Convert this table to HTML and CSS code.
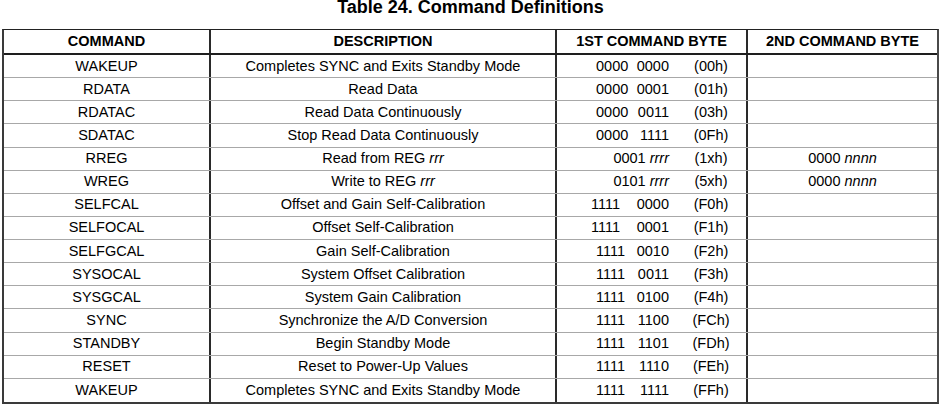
FILE: index.html
```html
<!DOCTYPE html>
<html>
<head>
<meta charset="utf-8">
<link rel="stylesheet" href="styles.css">
</head>
<body>
<div class="page">
  <div class="title">Table 24. Command Definitions</div>
  <div class="table">
    <div class="row head">
      <div class="c cmd">COMMAND</div>
      <div class="c desc">DESCRIPTION</div>
      <div class="c byte1h">1ST COMMAND BYTE</div>
      <div class="c byte2">2ND COMMAND BYTE</div>
    </div>
    <div class="body">
      <div class="row"><div class="c cmd">WAKEUP</div><div class="c desc">Completes SYNC and Exits Standby Mode</div><div class="c bin"><span class="n1">0000</span><span>0000</span></div><div class="c hex">(00h)</div><div class="c byte2"></div></div>
      <div class="row"><div class="c cmd">RDATA</div><div class="c desc">Read Data</div><div class="c bin"><span class="n1">0000</span><span>0001</span></div><div class="c hex">(01h)</div><div class="c byte2"></div></div>
      <div class="row"><div class="c cmd">RDATAC</div><div class="c desc">Read Data Continuously</div><div class="c bin"><span class="n1">0000</span><span>0011</span></div><div class="c hex">(03h)</div><div class="c byte2"></div></div>
      <div class="row"><div class="c cmd">SDATAC</div><div class="c desc">Stop Read Data Continuously</div><div class="c bin"><span class="n1">0000</span><span>1111</span></div><div class="c hex">(0Fh)</div><div class="c byte2"></div></div>
      <div class="row"><div class="c cmd">RREG</div><div class="c desc"><span>Read from REG <i>rrr</i></span></div><div class="c bin"><span>0001 <i>rrrr</i></span></div><div class="c hex">(1xh)</div><div class="c byte2"><span>0000 <i>nnnn</i></span></div></div>
      <div class="row"><div class="c cmd">WREG</div><div class="c desc"><span>Write to REG <i>rrr</i></span></div><div class="c bin"><span>0101 <i>rrrr</i></span></div><div class="c hex">(5xh)</div><div class="c byte2"><span>0000 <i>nnnn</i></span></div></div>
      <div class="row"><div class="c cmd">SELFCAL</div><div class="c desc">Offset and Gain Self-Calibration</div><div class="c bin wide"><span class="n1">1111</span><span>0000</span></div><div class="c hex">(F0h)</div><div class="c byte2"></div></div>
      <div class="row"><div class="c cmd">SELFOCAL</div><div class="c desc">Offset Self-Calibration</div><div class="c bin wide"><span class="n1">1111</span><span>0001</span></div><div class="c hex">(F1h)</div><div class="c byte2"></div></div>
      <div class="row"><div class="c cmd">SELFGCAL</div><div class="c desc">Gain Self-Calibration</div><div class="c bin"><span class="n1">1111</span><span>0010</span></div><div class="c hex">(F2h)</div><div class="c byte2"></div></div>
      <div class="row"><div class="c cmd">SYSOCAL</div><div class="c desc">System Offset Calibration</div><div class="c bin"><span class="n1">1111</span><span>0011</span></div><div class="c hex">(F3h)</div><div class="c byte2"></div></div>
      <div class="row"><div class="c cmd">SYSGCAL</div><div class="c desc">System Gain Calibration</div><div class="c bin"><span class="n1">1111</span><span>0100</span></div><div class="c hex">(F4h)</div><div class="c byte2"></div></div>
      <div class="row"><div class="c cmd">SYNC</div><div class="c desc">Synchronize the A/D Conversion</div><div class="c bin"><span class="n1">1111</span><span>1100</span></div><div class="c hex">(FCh)</div><div class="c byte2"></div></div>
      <div class="row"><div class="c cmd">STANDBY</div><div class="c desc">Begin Standby Mode</div><div class="c bin"><span class="n1">1111</span><span>1101</span></div><div class="c hex">(FDh)</div><div class="c byte2"></div></div>
      <div class="row"><div class="c cmd">RESET</div><div class="c desc">Reset to Power-Up Values</div><div class="c bin"><span class="n1">1111</span><span>1110</span></div><div class="c hex">(FEh)</div><div class="c byte2"></div></div>
      <div class="row last"><div class="c cmd">WAKEUP</div><div class="c desc">Completes SYNC and Exits Standby Mode</div><div class="c bin"><span class="n1">1111</span><span>1111</span></div><div class="c hex">(FFh)</div><div class="c byte2"></div></div>
    </div>
  </div>
</div>
</body>
</html>
```
FILE: styles.css
```css
* { box-sizing: border-box; }
html, body { margin: 0; padding: 0; background: #fff; }
body {
  font-family: "Liberation Sans", Arial, sans-serif;
  font-size: 14.5px;
  color: #000;
  width: 941px;
  height: 406px;
  overflow: hidden;
}
.page {
  padding: 0 2px;
}
.title {
  font-weight: bold;
  font-size: 18px;
  line-height: 14px;
  text-align: center;
  height: 29px;
}
.table {
  width: 937px;
  border-top: 1px solid #222;
  border-left: 2px solid #3a3a3a;
  border-right: 2px solid #4a4a4a;
  border-bottom: 2px solid #3a3a3a;
  display: flex;
  flex-direction: column;
}
.row {
  display: grid;
  grid-template-columns: 207px 346px 119px 72px 1fr;
  border-bottom: 1px solid #a8a8a8;
}
.row.last { border-bottom: none; }
.head {
  grid-template-columns: 207px 346px 191px 1fr;
  height: 25px;
  border-bottom: 2px solid #1e1e1e;
  font-weight: bold;
}
.body {
  height: 347px;
  display: grid;
  grid-template-rows: repeat(15, 1fr);
}
.c {
  display: flex;
  align-items: center;
  justify-content: center;
  border-right: 2px solid #2a2a2a;
  white-space: pre;
  padding-bottom: 1px;
}
.c:last-child { border-right: none; }
.bin {
  border-right: none;
  justify-content: flex-end;
  padding-right: 7px;
  padding-left: 39px;
}
.bin.wide { padding-left: 34px; }
.bin .n1 { margin-right: auto; }
.hex { justify-content: center; }
i { font-style: italic; }
```
